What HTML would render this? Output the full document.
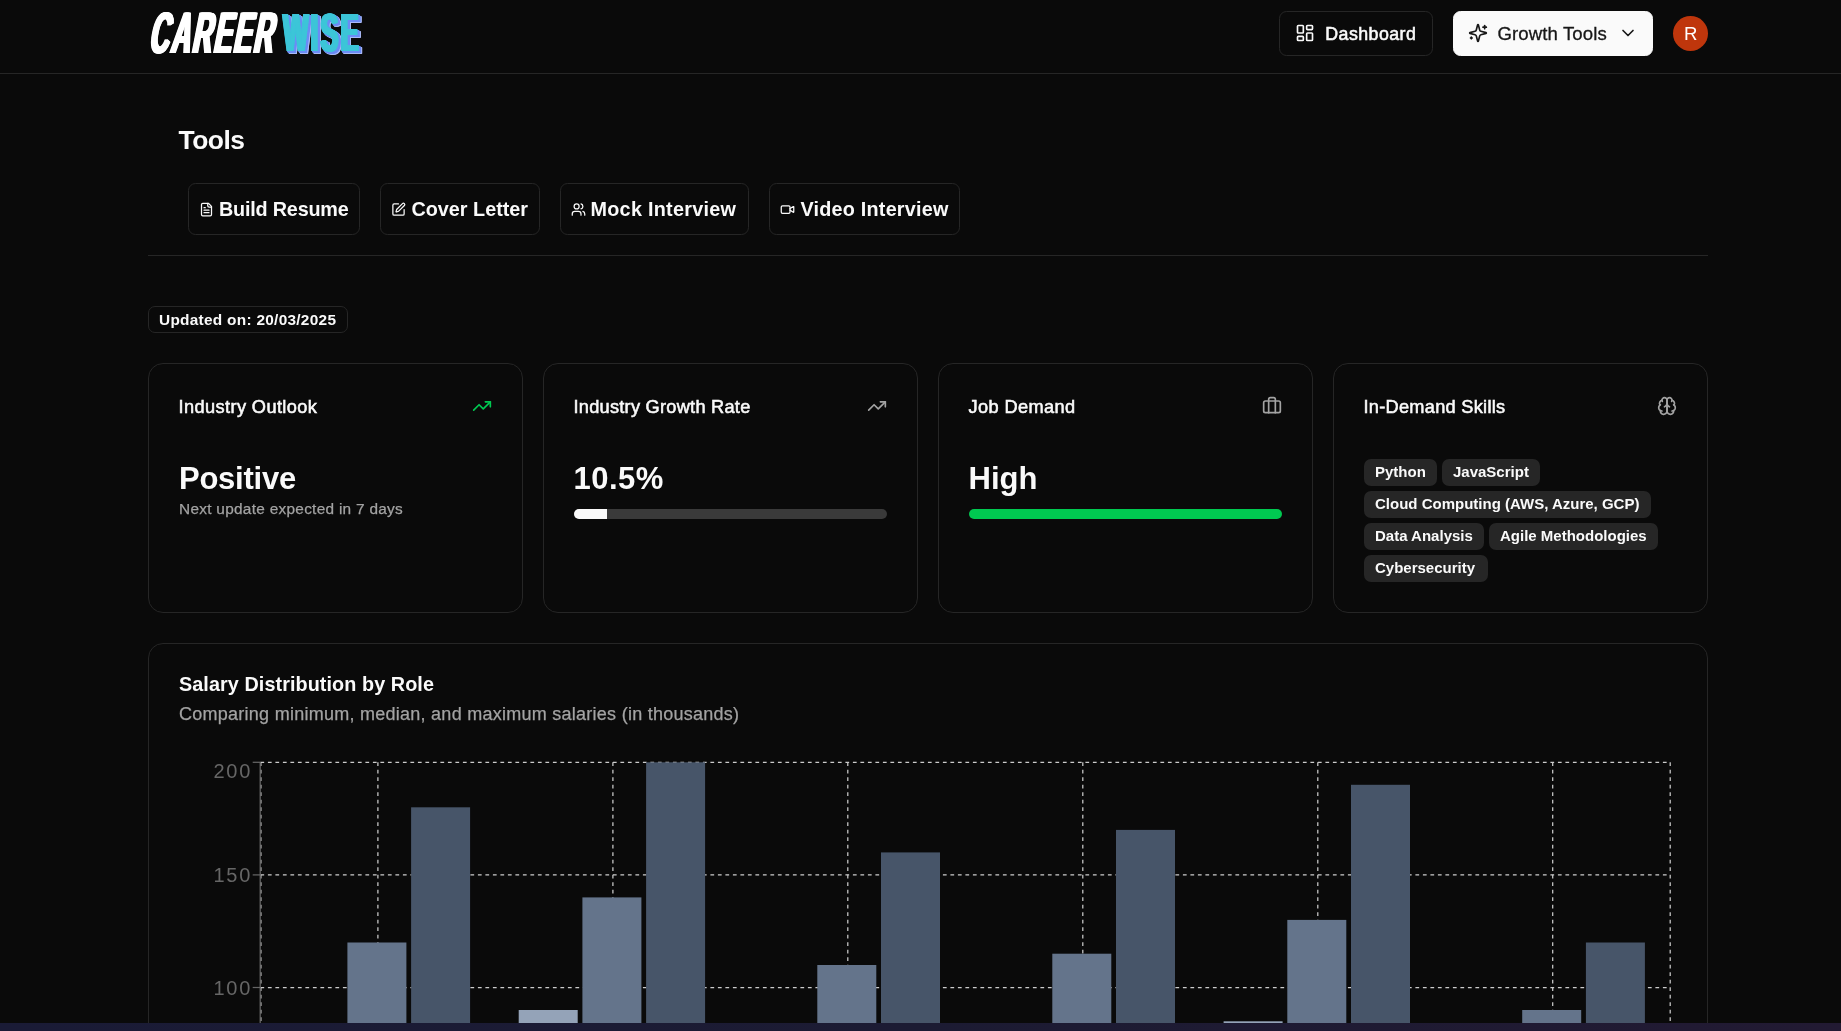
<!DOCTYPE html>
<html lang="en">
<head>
<meta charset="utf-8">
<title>CareerWise - Industry Insights</title>
<style>
*{box-sizing:border-box;margin:0;padding:0}
html,body{width:1841px;height:1031px;overflow:hidden;background:#0a0a0a}
body{position:relative;background:transparent;will-change:transform;font-family:"Liberation Sans",sans-serif;color:#fafafa;-webkit-font-smoothing:antialiased}
.abs{position:absolute}
.t{position:absolute;white-space:nowrap;line-height:1}
.b{font-weight:700}
.m{font-weight:400;-webkit-text-stroke:.55px currentColor}
svg.ic{position:absolute;fill:none;stroke:currentColor;stroke-width:2;stroke-linecap:round;stroke-linejoin:round;overflow:visible}
/* header */
header{position:absolute;left:0;top:0;width:1841px;height:74px;border-bottom:1px solid #262626;background:#0a0a0a}
.logo{position:absolute;left:0;top:0;height:73px}
.logo span{position:absolute;white-space:nowrap;line-height:1;font-weight:700;transform-origin:0 0}
.btn{position:absolute;border:1px solid #262626;border-radius:7.5px;background:#0a0a0a}
.btn.light{background:#fafafa;border-color:#fafafa;color:#171717}
.avatar{position:absolute;left:1673px;top:16px;width:35px;height:35px;border-radius:50%;background:#bf360c}
/* cards */
.card{position:absolute;border:1px solid #262626;border-radius:15px;background:#0a0a0a}
.chip{position:absolute;height:27px;border-radius:7px;background:#262626}
.muted{color:#a3a3a3;-webkit-text-stroke:.25px #a3a3a3}
.sk{font-size:15px}
</style>
</head>
<body>

<header>
  <div class="logo">
    <span id="lg1" style="left:157.800px;top:4px;font-size:58.5px;letter-spacing:4.5px;color:#fff;text-shadow:1px 0px 0 #fff,-1px 0px 0 #fff,2px 0px 0 #fff,-2px 0px 0 #fff,3px 0px 0 #fff,-3px 0px 0 #fff;transform:skewX(-11deg) scaleX(.457)">CAREER</span>
    <span id="lg2" style="left:283px;top:5.800px;font-size:53px;letter-spacing:4.5px;color:#3cc5d8;text-shadow:1px 0px 0 #3cc5d8,-1px 0px 0 #3cc5d8,2px 0px 0 #3cc5d8,-2px 0px 0 #3cc5d8,2.6px 0px 0 #3cc5d8,-2.6px 0px 0 #3cc5d8,-1px 1px 0 #6b8df5,0px 1px 0 #6b8df5,1px 1px 0 #6b8df5,2px 1px 0 #6b8df5,3px 1px 0 #6b8df5,4px 1px 0 #6b8df5,5px 1px 0 #6b8df5,6px 1px 0 #6b8df5,0px 2px 0 #6b8df5,1px 2px 0 #6b8df5,2px 2px 0 #6b8df5,3px 2px 0 #6b8df5,4px 2px 0 #6b8df5,5px 2px 0 #6b8df5,6px 2px 0 #6b8df5,7px 2px 0 #6b8df5,2px 3px 0 #aab9f7,3px 3px 0 #aab9f7,4px 3px 0 #aab9f7,5px 3px 0 #aab9f7,6px 3px 0 #aab9f7,7px 3px 0 #aab9f7,8px 3px 0 #aab9f7,9px 3px 0 #aab9f7,8px 2px 0 #aab9f7,9px 2px 0 #aab9f7;transform:scaleX(.507)">WISE</span>
  </div>

  <div class="btn" style="left:1279px;top:11px;width:154px;height:45px"></div>
  <svg class="ic" style="left:1295.250px;top:23px;width:20px;height:20px" viewBox="0 0 24 24"><rect width="7" height="9" x="3" y="3" rx="1"/><rect width="7" height="5" x="14" y="3" rx="1"/><rect width="7" height="9" x="14" y="12" rx="1"/><rect width="7" height="5" x="3" y="16" rx="1"/></svg>
  <span class="t m" id="tDash" style="left:1325.300px;top:26.200px;font-size:17.8px;letter-spacing:.45px">Dashboard</span>

  <div class="btn light" style="left:1453px;top:11px;width:200px;height:45px"></div>
  <svg class="ic" style="left:1468.250px;top:23px;width:20px;height:20px;color:#171717" viewBox="0 0 24 24"><path d="M9.937 15.5A2 2 0 0 0 8.5 14.063l-6.135-1.582a.5.5 0 0 1 0-.962L8.500 9.936A2 2 0 0 0 9.937 8.5l1.582-6.135a.5.5 0 0 1 .963 0L14.063 8.500A2 2 0 0 0 15.500 9.937l6.135 1.581a.5.5 0 0 1 0 .964L15.500 14.063a2 2 0 0 0-1.437 1.437l-1.582 6.135a.5.5 0 0 1-.963 0z"/><path d="M20 3v4"/><path d="M22 5h-4"/><path d="M4 17v2"/><path d="M5 18H3"/></svg>
  <span class="t" id="tGrow" style="left:1497.5px;top:24.5px;font-size:18.6px;letter-spacing:.1px;color:#171717;-webkit-text-stroke:.3px #171717">Growth Tools</span>
  <svg class="ic" style="left:1618px;top:23px;width:20px;height:20px;color:#171717" viewBox="0 0 24 24"><path d="m6 9 6 6 6-6"/></svg>

  <div class="avatar"></div>
  <span class="t" id="tR" style="left:1684px;top:24.8px;font-size:18.6px;color:#fff">R</span>
</header>

<main>
  <h1 class="t b" id="tTools" style="left:178.500px;top:127.200px;font-size:26.4px;letter-spacing:-.5px">Tools</h1>

  <div class="btn" style="left:188px;top:183px;width:172px;height:52px"></div>
  <svg class="ic" style="left:199px;top:202px;width:15px;height:15px" viewBox="0 0 24 24"><path d="M15 2H6a2 2 0 0 0-2 2v16a2 2 0 0 0 2 2h12a2 2 0 0 0 2-2V7Z"/><path d="M14 2v4a2 2 0 0 0 2 2h4"/><path d="M10 9H8"/><path d="M16 13H8"/><path d="M16 17H8"/></svg>
  <span class="t b" id="tb1" style="left:219px;top:199.800px;font-size:19.8px;letter-spacing:-.2px">Build Resume</span>

  <div class="btn" style="left:380px;top:183px;width:160px;height:52px"></div>
  <svg class="ic" style="left:391px;top:202px;width:15px;height:15px" viewBox="0 0 24 24"><path d="M12 3H5a2 2 0 0 0-2 2v14a2 2 0 0 0 2 2h14a2 2 0 0 0 2-2v-7"/><path d="M18.375 2.625a1 1 0 0 1 3 3l-9.013 9.014a2 2 0 0 1-.853.505l-2.873.84a.5.5 0 0 1-.62-.62l.84-2.873a2 2 0 0 1 .506-.852z"/></svg>
  <span class="t b" id="tb2" style="left:411.500px;top:199.800px;font-size:19.8px">Cover Letter</span>

  <div class="btn" style="left:560px;top:183px;width:189px;height:52px"></div>
  <svg class="ic" style="left:571px;top:202px;width:15px;height:15px" viewBox="0 0 24 24"><path d="M16 21v-2a4 4 0 0 0-4-4H6a4 4 0 0 0-4 4v2"/><circle cx="9" cy="7" r="4"/><path d="M22 21v-2a4 4 0 0 0-3-3.870"/><path d="M16 3.130a4 4 0 0 1 0 7.750"/></svg>
  <span class="t b" id="tb3" style="left:590.500px;top:199.800px;font-size:19.8px;letter-spacing:.28px">Mock Interview</span>

  <div class="btn" style="left:769px;top:183px;width:191px;height:52px"></div>
  <svg class="ic" style="left:780px;top:202px;width:15px;height:15px" viewBox="0 0 24 24"><path d="m16 13 5.223 3.482a.5.5 0 0 0 .777-.416V7.870a.5.5 0 0 0-.752-.432L16 10.500"/><rect x="2" y="6" width="14" height="12" rx="2"/></svg>
  <span class="t b" id="tb4" style="left:800.500px;top:199.800px;font-size:19.8px;letter-spacing:.22px">Video Interview</span>

  <div class="abs" style="left:148px;top:255px;width:1560px;height:1px;background:#262626"></div>

  <div class="btn" style="left:148px;top:306px;width:200px;height:27px;border-radius:7px"></div>
  <span class="t b" id="tUpd" style="left:159px;top:312px;font-size:15.4px;letter-spacing:.28px">Updated on: 20/03/2025</span>


  <!-- stat cards -->
  <div class="card" style="left:148px;top:363px;width:375px;height:250px"></div>
  <span class="t m" id="c1t" style="left:178.500px;top:397.700px;font-size:18.2px;letter-spacing:.4px">Industry Outlook</span>
  <svg class="ic" style="left:472px;top:396px;width:20px;height:20px;color:#00c951" viewBox="0 0 24 24"><polyline points="22 7 13.5 15.5 8.5 10.5 2 17"/><polyline points="16 7 22 7 22 13"/></svg>
  <span class="t b" id="c1v" style="left:179px;top:463px;font-size:31px;letter-spacing:-.25px">Positive</span>
  <span class="t muted" id="c1s" style="left:179px;top:500.600px;font-size:15.4px;letter-spacing:.28px">Next update expected in 7 days</span>

  <div class="card" style="left:543px;top:363px;width:375px;height:250px"></div>
  <span class="t m" id="c2t" style="left:573.500px;top:397.700px;font-size:18.2px;letter-spacing:.26px">Industry Growth Rate</span>
  <svg class="ic" style="left:867px;top:396px;width:20px;height:20px;color:#a3a3a3" viewBox="0 0 24 24"><polyline points="22 7 13.5 15.5 8.5 10.5 2 17"/><polyline points="16 7 22 7 22 13"/></svg>
  <span class="t b" id="c2v" style="left:573.500px;top:463px;font-size:31px;letter-spacing:.5px">10.5%</span>
  <div class="abs" style="left:574px;top:509px;width:313px;height:10px;border-radius:5px;background:#3a3a3a;overflow:hidden"><div style="width:33px;height:10px;background:#fafafa"></div></div>

  <div class="card" style="left:938px;top:363px;width:375px;height:250px"></div>
  <span class="t m" id="c3t" style="left:968.500px;top:397.700px;font-size:18.2px;letter-spacing:.4px">Job Demand</span>
  <svg class="ic" style="left:1262px;top:396px;width:20px;height:20px;color:#a3a3a3" viewBox="0 0 24 24"><path d="M16 20V4a2 2 0 0 0-2-2h-4a2 2 0 0 0-2 2v16"/><rect width="20" height="14" x="2" y="6" rx="2"/></svg>
  <span class="t b" id="c3v" style="left:968.500px;top:463px;font-size:31px">High</span>
  <div class="abs" style="left:969px;top:509px;width:313px;height:10px;border-radius:5px;background:#00c951"></div>

  <div class="card" style="left:1333px;top:363px;width:375px;height:250px"></div>
  <span class="t m" id="c4t" style="left:1363.500px;top:397.700px;font-size:18.2px;letter-spacing:.28px">In-Demand Skills</span>
  <svg class="ic" style="left:1657px;top:396px;width:20px;height:20px;color:#a3a3a3" viewBox="0 0 24 24"><path d="M12 5a3 3 0 1 0-5.997.125 4 4 0 0 0-2.526 5.770 4 4 0 0 0 .556 6.588A4 4 0 1 0 12 18Z"/><path d="M12 5a3 3 0 1 1 5.997.125 4 4 0 0 1 2.526 5.770 4 4 0 0 1-.556 6.588A4 4 0 1 1 12 18Z"/><path d="M15 13a4.500 4.500 0 0 1-3-4 4.500 4.500 0 0 1-3 4"/><path d="M17.599 6.500a3 3 0 0 0 .399-1.375"/><path d="M6.003 5.125A3 3 0 0 0 6.401 6.500"/><path d="M3.477 10.896a4 4 0 0 1 .585-.396"/><path d="M19.938 10.500a4 4 0 0 1 .585.396"/><path d="M6 18a4 4 0 0 1-1.967-.516"/><path d="M19.967 17.484A4 4 0 0 1 18 18"/></svg>

  <div class="chip" style="left:1364px;top:459px;width:73px"></div><span class="t b sk" id="s1" style="left:1375px;top:463.900px">Python</span>
  <div class="chip" style="left:1442px;top:459px;width:98px"></div><span class="t b sk" id="s2" style="left:1453px;top:463.900px">JavaScript</span>
  <div class="chip" style="left:1364px;top:491px;width:287px"></div><span class="t b sk" id="s3" style="left:1375px;top:495.900px">Cloud Computing (AWS, Azure, GCP)</span>
  <div class="chip" style="left:1364px;top:523px;width:120px"></div><span class="t b sk" id="s4" style="left:1375px;top:527.900px">Data Analysis</span>
  <div class="chip" style="left:1489px;top:523px;width:169px"></div><span class="t b sk" id="s5" style="left:1500px;top:527.900px">Agile Methodologies</span>
  <div class="chip" style="left:1364px;top:555px;width:124px"></div><span class="t b sk" id="s6" style="left:1375px;top:559.900px">Cybersecurity</span>
<!--CARDS-END-->
<!--CHART-->
  <!-- salary chart -->
  <div class="card" style="left:148px;top:643px;width:1560px;height:640px"></div>
  <span class="t b" id="cht" style="left:179px;top:675px;font-size:19.8px;letter-spacing:.08px">Salary Distribution by Role</span>
  <span class="t muted" id="chs" style="left:179px;top:704.500px;font-size:18px;letter-spacing:.26px">Comparing minimum, median, and maximum salaries (in thousands)</span>
  <svg class="abs" style="left:0;top:0" width="1841" height="1031" viewBox="0 0 1841 1031" font-family="'Liberation Sans',sans-serif">
    <g stroke="#ccc" stroke-width="1.25" stroke-dasharray="3.75 3.75" fill="none"><line x1="260.4" y1="1212.7" x2="1670.2" y2="1212.7"/><line x1="260.4" y1="1100.1" x2="1670.2" y2="1100.1"/><line x1="260.4" y1="987.5" x2="1670.2" y2="987.5"/><line x1="260.4" y1="874.9" x2="1670.2" y2="874.9"/><line x1="260.4" y1="762.3" x2="1670.2" y2="762.3"/><line x1="260.9" y1="762.3" x2="260.9" y2="1212.7"/><line x1="377.9" y1="762.3" x2="377.9" y2="1212.7"/><line x1="612.9" y1="762.3" x2="612.9" y2="1212.7"/><line x1="847.8" y1="762.3" x2="847.8" y2="1212.7"/><line x1="1082.8" y1="762.3" x2="1082.8" y2="1212.7"/><line x1="1317.8" y1="762.3" x2="1317.8" y2="1212.7"/><line x1="1552.7" y1="762.3" x2="1552.7" y2="1212.7"/><line x1="1670.2" y1="762.3" x2="1670.2" y2="1212.7"/></g>
    <g stroke="#666" stroke-width="1.25" fill="none"><line x1="260.2" y1="762.3" x2="260.2" y2="1212.7"/><line x1="252.7" y1="1212.7" x2="260.4" y2="1212.7"/><line x1="252.7" y1="1100.1" x2="260.4" y2="1100.1"/><line x1="252.7" y1="987.5" x2="260.4" y2="987.5"/><line x1="252.7" y1="874.9" x2="260.4" y2="874.9"/><line x1="252.7" y1="762.3" x2="260.4" y2="762.3"/></g>
    <g fill="#666" font-size="20" letter-spacing="1.7" text-anchor="end"><text x="252.0" y="778.0">200</text><text x="252.0" y="882.0">150</text><text x="252.0" y="994.6">100</text><text x="252.0" y="1107.2">50</text><text x="252.0" y="1219.8">0</text></g>
    <g><rect x="283.7" y="1066.3" width="59.0" height="146.4" fill="#94a3b8"/><rect x="347.4" y="942.5" width="59.0" height="270.2" fill="#64748b"/><rect x="411.1" y="807.3" width="59.0" height="405.4" fill="#475569"/></g>
    <g><rect x="518.7" y="1010.0" width="59.0" height="202.7" fill="#94a3b8"/><rect x="582.4" y="897.4" width="59.0" height="315.3" fill="#64748b"/><rect x="646.1" y="762.3" width="59.0" height="450.4" fill="#475569"/></g>
    <g><rect x="753.6" y="1077.6" width="59.0" height="135.1" fill="#94a3b8"/><rect x="817.3" y="965.0" width="59.0" height="247.7" fill="#64748b"/><rect x="881.0" y="852.4" width="59.0" height="360.3" fill="#475569"/></g>
    <g><rect x="988.6" y="1055.1" width="59.0" height="157.6" fill="#94a3b8"/><rect x="1052.3" y="953.7" width="59.0" height="259.0" fill="#64748b"/><rect x="1116.0" y="829.9" width="59.0" height="382.8" fill="#475569"/></g>
    <g><rect x="1223.6" y="1021.3" width="59.0" height="191.4" fill="#94a3b8"/><rect x="1287.3" y="919.9" width="59.0" height="292.8" fill="#64748b"/><rect x="1351.0" y="784.8" width="59.0" height="427.9" fill="#475569"/></g>
    <g><rect x="1458.5" y="1088.8" width="59.0" height="123.9" fill="#94a3b8"/><rect x="1522.2" y="1010.0" width="59.0" height="202.7" fill="#64748b"/><rect x="1585.9" y="942.5" width="59.0" height="270.2" fill="#475569"/></g>
  </svg>
<!--CHART-END-->
</main>

<div class="abs" style="left:0;top:1023px;width:1841px;height:8px;background:linear-gradient(90deg,#1a1b36,#1c1b33 50%,#221a33)"></div>
</body>
</html>
